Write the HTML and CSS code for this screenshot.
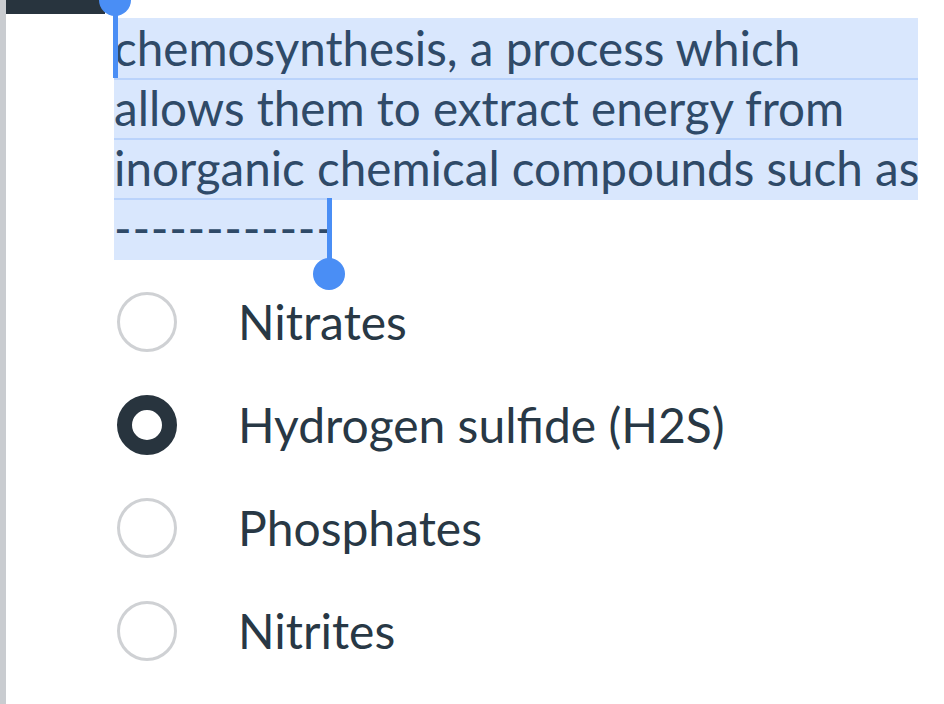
FILE: index.html
```html
<!DOCTYPE html>
<html>
<head>
<meta charset="utf-8">
<link rel="stylesheet" href="styles.css">
</head>
<body>
<div class="page">
  <div class="rail"></div>
  <div class="main">
    <div class="topbar"></div>
    <div class="question">
      <div class="line full">chemosynthesis, a process which</div>
      <div class="line full">allows them to extract energy from</div>
      <div class="line full">inorganic chemical compounds such as</div>
      <div class="line part"><span class="blank">------------</span></div>
      <span class="handle start"><span class="knob"></span><span class="stem"></span></span>
      <span class="handle end"><span class="stem"></span><span class="knob"></span></span>
    </div>
    <div class="options">
      <label class="option"><span class="radio"></span><span class="label">Nitrates</span></label>
      <label class="option"><span class="radio checked"></span><span class="label">Hydrogen sulfide (H2S)</span></label>
      <label class="option"><span class="radio"></span><span class="label">Phosphates</span></label>
      <label class="option"><span class="radio"></span><span class="label">Nitrites</span></label>
    </div>
  </div>
</div>
</body>
</html>
```
FILE: styles.css
```css
html, body {
  margin: 0;
  padding: 0;
  background: #ffffff;
}
.page {
  display: flex;
  width: 944px;
  height: 704px;
  overflow: hidden;
  font-family: Lato, "Open Sans", sans-serif;
}
.rail {
  width: 6px;
  flex: none;
  background: #c9ccd0;
}
.main {
  flex: 1;
  display: flex;
  flex-direction: column;
}
.topbar {
  width: 99px;
  height: 14px;
  background: #28343e;
}
.question {
  position: relative;
  margin: 4px 0 0 108px;
  font-size: 47.6px;
  color: #2f4a68;
}
.line {
  height: 62px;
  line-height: 60px;
  margin-bottom: -2px;
  background: rgba(66, 133, 244, 0.2);
  white-space: nowrap;
}
.line.full {
  width: 804px;
}
.line.part {
  width: 216px;
}
.blank {
  letter-spacing: 0.7px;
}
.handle {
  position: absolute;
  display: flex;
  flex-direction: column;
  align-items: center;
  width: 32px;
}
.handle .knob {
  width: 32px;
  height: 32px;
  border-radius: 50%;
  background: #4a8ef5;
}
.handle .stem {
  width: 5px;
  background: #4a8ef5;
}
.handle.start {
  left: -15px;
  top: -34px;
}
.handle.start .knob {
  margin-bottom: -16px;
}
.handle.start .stem {
  height: 78px;
}
.handle.end {
  left: 199px;
  top: 180px;
}
.handle.end .stem {
  height: 64px;
  margin-bottom: -4px;
}
.options {
  margin-top: 12px;
  display: flex;
  flex-direction: column;
}
.option {
  height: 103px;
  display: flex;
  align-items: center;
  padding-left: 111px;
}
.radio {
  width: 60px;
  height: 60px;
  box-sizing: border-box;
  border-radius: 50%;
  border: 3px solid #cfd1d4;
  flex: none;
}
.radio.checked {
  border: 15px solid #28343e;
  box-shadow: inset 0 0 0 1px #ffffff;
}
.label {
  margin-left: 61px;
  font-size: 48px;
  color: #283845;
}
```
